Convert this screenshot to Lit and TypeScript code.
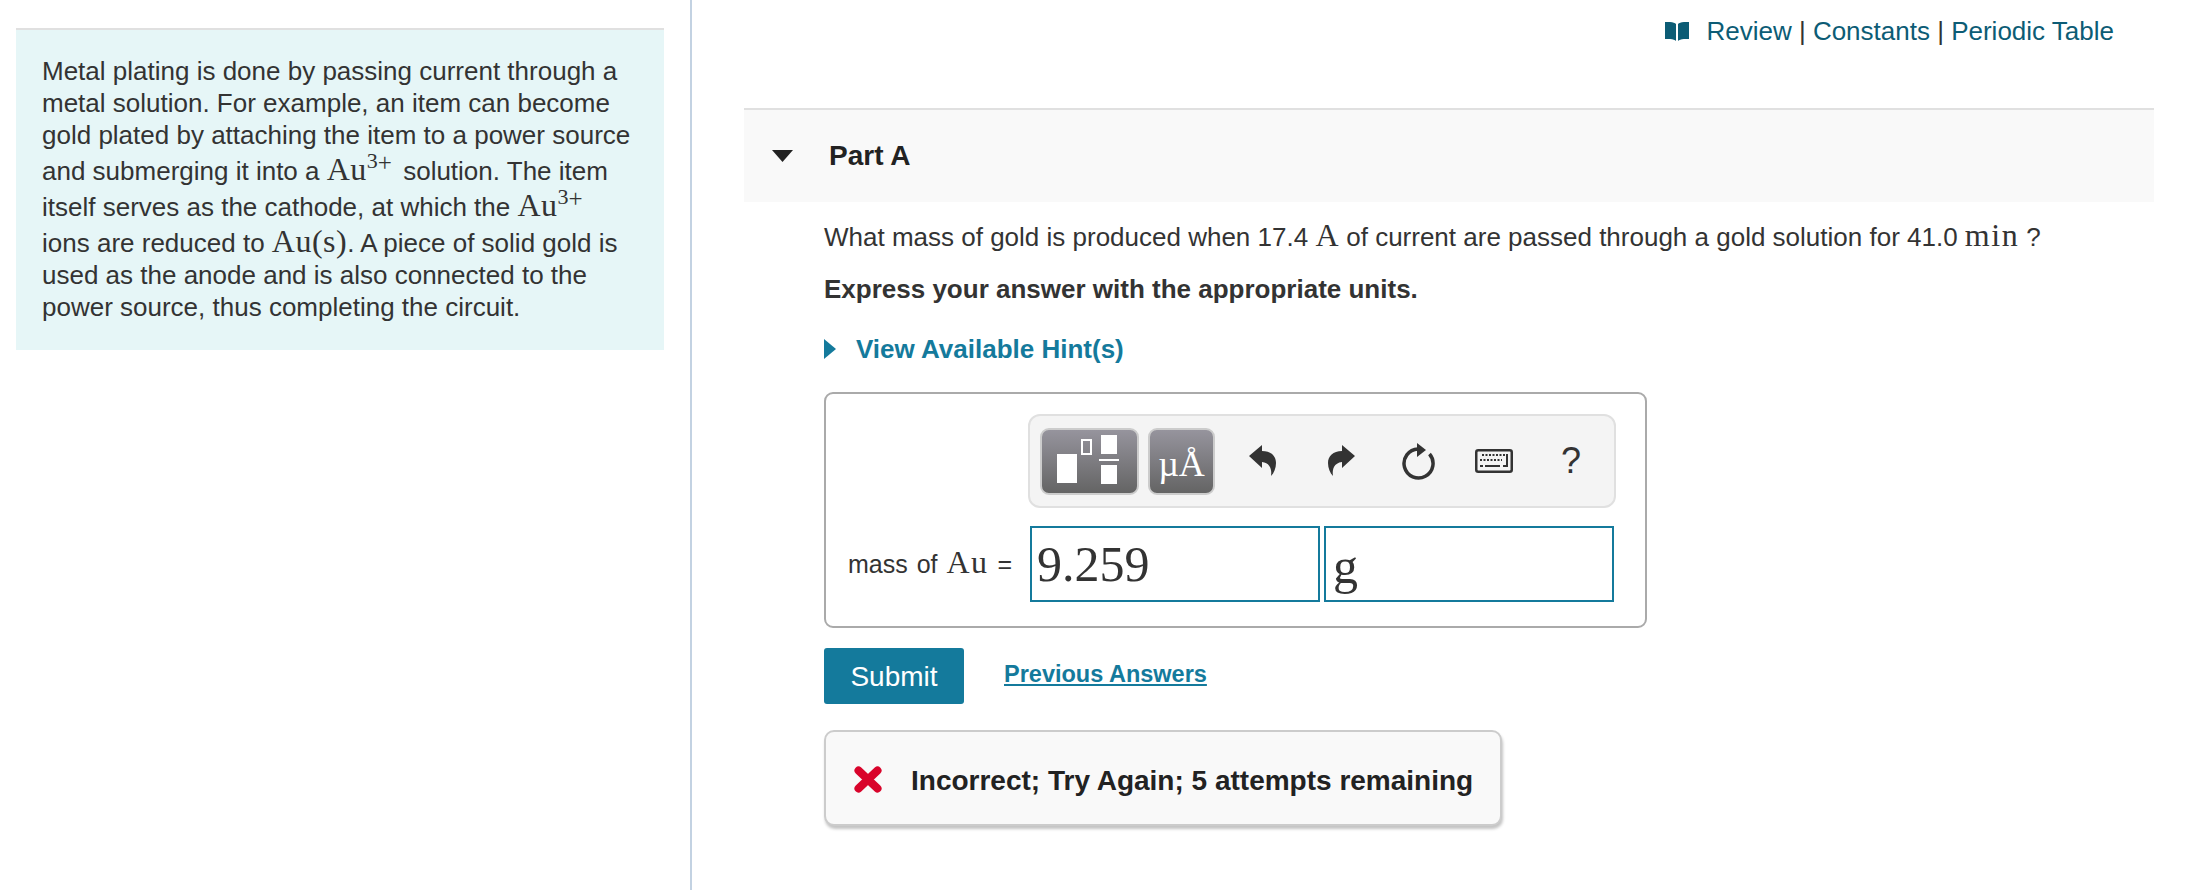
import { LitElement, html, css } from "lit";
import { customElement } from "lit/decorators.js";

@customElement("app-root")
export class AppRoot extends LitElement {
  static styles = css`
    :host { display: block; width: 2198px; height: 890px; overflow: hidden; background: #fff; color: #333; font-family: "Liberation Sans", Arial, sans-serif; }
    .page { display: flex; height: 890px; }
    .left { width: 690px; flex: none; padding: 28px 26px 0 16px; box-sizing: border-box; }
    .intro { background: #e6f6f7; border-top: 2px solid #e0e0e0; padding: 25px 20px 26px 26px; font-size: 26px; line-height: 32px; height: 322px; box-sizing: border-box; color: #333; white-space: nowrap; }
    .m { font-family: "Liberation Serif", serif; font-size: 32px; letter-spacing: 0.5px; }
    .m.min { letter-spacing: 1.5px; }
    .intro .m { display: inline-block; line-height: 36px; }
    .m sup { font-size: 22px; line-height: 0; letter-spacing: 0; vertical-align: 12px; margin-right: 4px; }
    .plus { font-size: 25px; line-height: 0; vertical-align: -3px; }
    .divider { width: 2px; flex: none; background: #c3d2e2; }
    .right { flex: 1; padding: 0 44px 0 52px; min-width: 0; }
    .links { height: 108px; box-sizing: border-box; padding: 15px 40px 0 0; display: flex; justify-content: flex-end; align-items: flex-start; font-size: 26px; line-height: 32px; color: #333; }
    .links svg { margin: 7px 17px 0 0; }
    .links a { color: #0c5c75; }
    .part { height: 94px; box-sizing: border-box; border-top: 2px solid #e0e0e0; background: #f9f9f9; display: flex; align-items: center; }
    .part svg { margin-left: 28px; }
    .part b { margin-left: 36px; font-size: 28px; color: #222; }
    .body { padding: 15px 0 0 80px; }
    .q { font-size: 26px; line-height: 40px; white-space: nowrap; height: 40px; }
    .q .m { line-height: 0; }
    .express { font-size: 26px; font-weight: 700; line-height: 32px; margin-top: 16px; }
    .hint { display: flex; align-items: center; margin-top: 27px; height: 34px; font-size: 26px; font-weight: 700; color: #147a9c; }
    .hint svg { margin-right: 20px; }
    .answer { margin-top: 26px; width: 823px; height: 236px; box-sizing: border-box; border: 2px solid #aaa; border-radius: 9px; padding: 20px 31px 0 22px; display: flex; flex-direction: column; align-items: flex-end; }
    .toolbar { width: 588px; height: 94px; margin-right: -2px; box-sizing: border-box; background: #f4f4f4; border: 2px solid #e0e0e0; border-radius: 12px; position: relative; display: flex; align-items: center; padding-left: 10px; }
    .tbtn { height: 67px; box-sizing: border-box; border: 2px solid #ccc; border-radius: 9px; background: linear-gradient(#96949d, #646464); display: flex; align-items: center; justify-content: center; flex: none; }
    .tbtn.a { width: 99px; }
    .tbtn.b { width: 67px; margin-left: 9px; color: #fff; font-family: "Liberation Serif", serif; font-size: 36px; padding-top: 6px; }
    .tools { display: flex; align-items: center; margin-left: 34px; }
    .tools svg { flex: none; display: block; }
    .q-mark { font-size: 36px; color: #333; margin-left: 48px; width: 20px; text-align: center; }
    .row { align-self: stretch; display: flex; align-items: center; margin-top: 18px; }
    .label { flex: 1; font-size: 25px; white-space: nowrap; word-spacing: 2px; }
    .label .m { line-height: 0; letter-spacing: 1.5px; }
    .inp { width: 290px; height: 76px; box-sizing: border-box; border: 2px solid #147a9c; font-family: "Liberation Serif", serif; font-size: 50px; line-height: 72px; padding-left: 5px; color: #333; }
    .inp.u { margin-left: 4px; padding-left: 7px; line-height: 77px; }
    .actions { display: flex; align-items: flex-start; margin-top: 20px; }
    .submit { width: 140px; height: 56px; box-sizing: border-box; padding-top: 2px; background: #147a9c; border-radius: 3px; color: #fff; font-size: 28px; display: flex; align-items: center; justify-content: center; }
    .prev { margin: 12px 0 0 40px; font-size: 23.5px; font-weight: 700; color: #147a9c; text-decoration: underline; line-height: 28px; }
    .fb { margin-top: 26px; width: 678px; height: 96px; box-sizing: border-box; border: 2px solid #ccc; border-radius: 10px; background: #f9f9f9; box-shadow: 1px 3px 3px #c4c4c4; display: flex; align-items: center; padding: 3px 0 0 28px; font-size: 28px; font-weight: 700; color: #222; white-space: nowrap; }
    .fb svg { margin-right: 29px; }
    .fb span { margin-top: 2px; }
  `;

  render() {
    const sup = html`<sup>3<span class="plus">+</span></sup>`;
    return html`<div class="page">
      <div class="left">
        <div class="intro">Metal plating is done by passing current through a<br>metal solution. For example, an item can become<br>gold plated by attaching the item to a power source<br>and submerging it into a <span class="m">Au${sup}</span> solution. The item<br>itself serves as the cathode, at which the <span class="m">Au${sup}</span><br>ions are reduced to <span class="m">Au(s)</span>. A piece of solid gold is<br>used as the anode and is also connected to the<br>power source, thus completing the circuit.</div>
      </div>
      <div class="divider"></div>
      <div class="right">
        <div class="links">
          <svg width="24" height="20" viewBox="0 0 24 20"><path fill="#0c5c75" d="M0 0h5c3 0 5 1 6 2v17c-1-1-3-2-6-2H0zM24 0h-5c-3 0-5 1-6 2v17c1-1 3-2 6-2h5z"/></svg>
          <a>Review</a>&nbsp;|&nbsp;<a>Constants</a>&nbsp;|&nbsp;<a>Periodic Table</a>
        </div>
        <div class="part">
          <svg width="21" height="12" viewBox="0 0 21 12"><path fill="#222" d="M0 0h21L10.500 12z"/></svg>
          <b>Part A</b>
        </div>
        <div class="body">
          <div class="q">What mass of gold is produced when 17.4 <span class="m">A</span> of current are passed through a gold solution for 41.0 <span class="m min">min</span> ?</div>
          <div class="express">Express your answer with the appropriate units.</div>
          <div class="hint">
            <svg width="12" height="20" viewBox="0 0 12 20"><path fill="#147a9c" d="M0 0l12 10L0 20z"/></svg>
            View Available Hint(s)
          </div>
          <div class="answer">
            <div class="toolbar">
              <div class="tbtn a">
                <svg width="66" height="52" viewBox="0 0 66 52"><path fill="#fff" d="M0 19h20v29H0zM44 0h16v19H44zM42 24h20v2H42zM44 30h16v19H44z"/><path fill="none" stroke="#fff" stroke-width="2" d="M25 5h9v14h-9z"/></svg>
              </div>
              <div class="tbtn b">µÅ</div>
              <div class="tools">
                <svg width="28" height="32" viewBox="0 0 28 32"><path fill="#333" d="M0 11L13 0v6c9 0 14 5 14 12 0 5-2 10-5 13 1-7-1-13-9-14v6z"/></svg>
                <svg style="margin-left:50px" width="28" height="32" viewBox="0 0 28 32"><path fill="#333" d="M28 11L15 0v6C6 6 1 11 1 18c0 5 2 10 5 13-1-7 1-13 9-14v6z"/></svg>
                <svg style="margin-left:46px" width="34" height="38" viewBox="0 0 34 38"><path fill="none" stroke="#333" stroke-width="3.500" d="M17 7A14.500 14.500 0 1 0 28.500 12"/><path fill="#333" d="M16 1l9 7-9 7z"/></svg>
                <svg style="margin-left:40px" width="38" height="24" viewBox="0 0 38 24"><rect x="1.250" y="1.250" width="35.500" height="21.500" rx="2" fill="#f4f4f4" stroke="#333" stroke-width="2.500"/><path fill="none" stroke="#333" stroke-width="2" stroke-dasharray="2 1.500" d="M7 6h23M5 11h22"/><path fill="none" stroke="#333" stroke-width="2" d="M5 17h3M10 17h15M28 17h4M32 5v13"/></svg>
                <div class="q-mark">?</div>
              </div>
            </div>
            <div class="row">
              <div class="label">mass of <span class="m">Au</span> =</div>
              <div class="inp">9.259</div>
              <div class="inp u">g</div>
            </div>
          </div>
          <div class="actions">
            <div class="submit">Submit</div>
            <div class="prev">Previous Answers</div>
          </div>
          <div class="fb">
            <svg width="28" height="27" viewBox="0 0 28 27"><path stroke="#d9042b" stroke-width="8" stroke-linecap="round" d="M4.500 4.500l19 18M23.500 4.500l-19 18"/></svg>
            <span>Incorrect; Try Again; 5 attempts remaining</span>
          </div>
        </div>
      </div>
    </div>`;
  }
}
